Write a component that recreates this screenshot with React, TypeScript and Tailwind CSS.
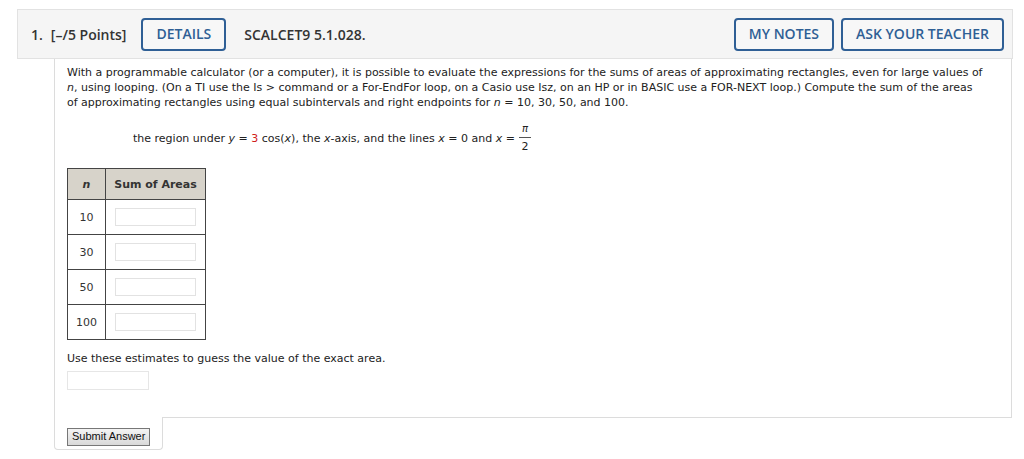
import React from 'react';

const body = { fontFamily: '"DejaVu Sans", Verdana, sans-serif' };
const head = { fontFamily: '"Open Sans", Arial, sans-serif' };

function HeaderButton({ label }: { label: string }) {
  return (
    <button
      className="h-[33px] px-[13px] border-2 border-[#2f5f95] rounded-[4px] text-[#2f5f95] text-[14px] font-semibold bg-[#f7f7f7] leading-none"
      style={head}
    >
      {label}
    </button>
  );
}

function Fraction() {
  return (
    <span className="inline-flex flex-col items-center mx-[4px]">
      <span className="italic text-[10px] leading-[13px]">π</span>
      <span className="h-px w-[12px] bg-[#555] my-[2px]" />
      <span className="text-[11px] leading-[14px]">2</span>
    </span>
  );
}

const rows = ['10', '30', '50', '100'];

export default function App() {
  return (
    <div className="w-full h-[459px] bg-white pt-[9px] pl-[17px] pr-[11px] text-[#222]">
      {/* question header */}
      <div className="h-[50px] border border-[#e2e2e2] bg-[#f5f5f5] flex items-center pl-[13px] pr-[8px]" style={head}>
        <span className="text-[14px] font-semibold text-[#333] mr-[8px]">1.</span>
        <span className="text-[14px] font-semibold text-[#333]">[–/5 Points]</span>
        <div className="ml-[15px]">
          <HeaderButton label="DETAILS" />
        </div>
        <span className="ml-[18px] text-[14px] font-semibold text-[#333]">SCALCET9 5.1.028.</span>
        <div className="ml-auto flex gap-[7px]">
          <HeaderButton label="MY NOTES" />
          <HeaderButton label="ASK YOUR TEACHER" />
        </div>
      </div>

      {/* question body */}
      <div className="ml-[37px] mr-px h-[359px] border-l border-r border-b border-[#dcdcdc] pl-[12px] pt-[6px] text-[11px] leading-[15px]" style={body}>
        <div className="whitespace-nowrap">
          <div>With a programmable calculator (or a computer), it is possible to evaluate the expressions for the sums of areas of approximating rectangles, even for large values of</div>
          <div><i>n</i>, using looping. (On a TI use the Is &gt; command or a For-EndFor loop, on a Casio use Isz, on an HP or in BASIC use a FOR-NEXT loop.) Compute the sum of the areas</div>
          <div>of approximating rectangles using equal subintervals and right endpoints for <i>n</i> = 10, 30, 50, and 100.</div>
        </div>

        <div className="mt-[12px] ml-[66px] whitespace-nowrap flex items-center">
          <span>
            the region under <i>y</i> = <span className="text-[#d0201a]">3</span> cos(<i>x</i>), the <i>x</i>-axis, and the lines <i>x</i> = 0 and <i>x</i> =
          </span>
          <Fraction />
        </div>

        <table className="mt-[14px] border-collapse border border-[#444]">
          <thead>
            <tr className="bg-[#d7d3ca] h-[31px]">
              <th className="w-[38px] border border-[#444] italic font-bold text-[#333]">n</th>
              <th className="w-[100px] border border-[#444] font-bold text-[#333]">Sum of Areas</th>
            </tr>
          </thead>
          <tbody>
            {rows.map((r) => (
              <tr key={r} className="h-[35px]">
                <td className="border border-[#444] text-center text-[#333]">{r}</td>
                <td className="border border-[#444] px-[9px]">
                  <div className="h-[18px] w-[81px] border border-[#e2e2e2] bg-white" />
                </td>
              </tr>
            ))}
          </tbody>
        </table>

        <div className="mt-[11px]">Use these estimates to guess the value of the exact area.</div>
        <div className="mt-[5px] h-[19px] w-[82px] border border-[#e6e6e6] bg-white" />
      </div>

      {/* submit tab */}
      <div className="ml-[37px] -mt-px w-[109px] h-[33px] border-l border-r border-b border-[#dcdcdc] rounded-b-[4px] bg-white pl-[12px] pt-[5px]">
        <button
          className="h-[18px] px-[4px] border border-[#777] bg-gradient-to-b from-[#f4f4f4] to-[#d9d9d9] text-[11px] leading-none text-[#111]"
          style={{ fontFamily: '"Liberation Sans", Arial, sans-serif' }}
        >
          Submit Answer
        </button>
      </div>
    </div>
  );
}
